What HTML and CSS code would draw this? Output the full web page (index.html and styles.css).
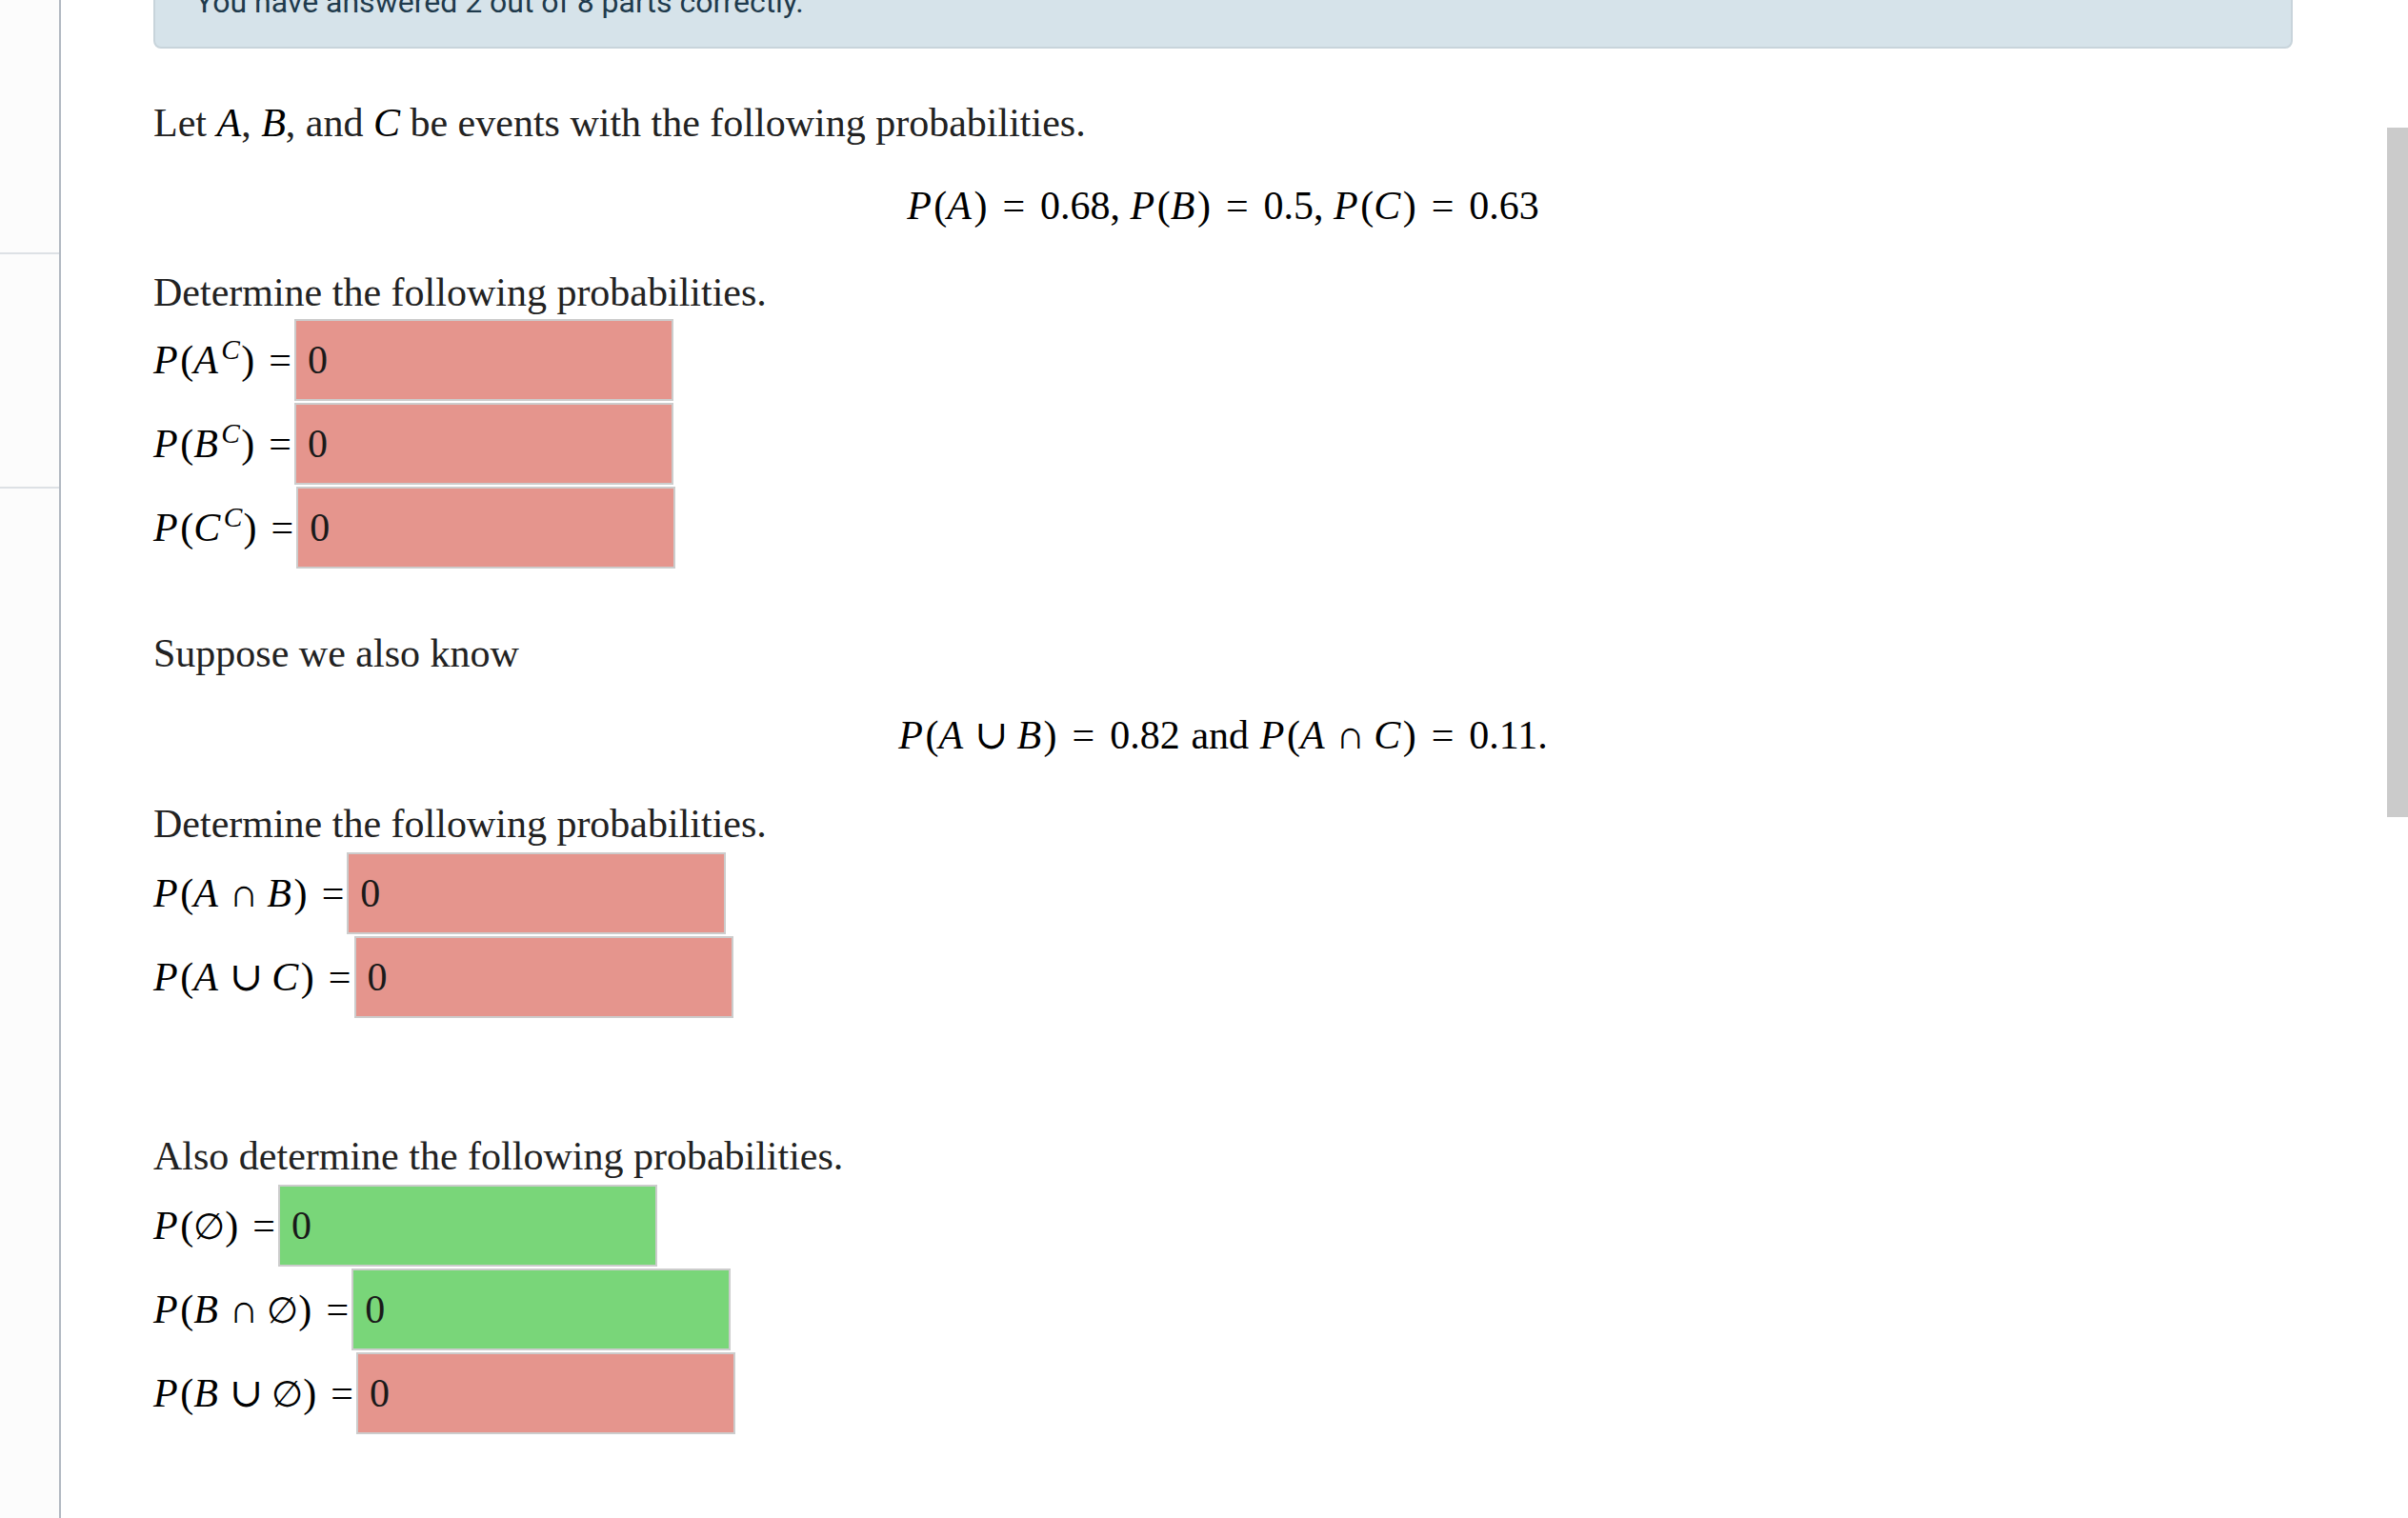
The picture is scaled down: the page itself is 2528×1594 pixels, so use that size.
FILE: index.html
```html
<!DOCTYPE html>
<html lang="en">
<head>
<meta charset="utf-8">
<title>Probability problem</title>
<link rel="stylesheet" href="styles.css">
</head>
<body>
<div class="page">
  <aside class="sidebar">
    <div class="side-a"></div>
    <div class="side-b"></div>
  </aside>
  <main class="main">
    <div class="banner">You have answered 2 out of 8 parts correctly.</div>

    <p class="text t-let">Let <i class="mi">A</i>, <i class="mi">B</i>, and <i class="mi">C</i> be events with the following probabilities.</p>
    <div class="display math d1"><i>P</i>(<i>A</i>)<span class="rel">=</span>0.68,<span class="sp"></span><i>P</i>(<i>B</i>)<span class="rel">=</span>0.5,<span class="sp"></span><i>P</i>(<i>C</i>)<span class="rel">=</span>0.63</div>

    <p class="text t-det1">Determine the following probabilities.</p>
    <div class="answers a1">
      <div class="row"><span class="math label"><i>P</i>(<i>A</i><sup>C</sup>)<span class="req">=</span></span><input class="ans wrong" value="0" readonly></div>
      <div class="row"><span class="math label"><i>P</i>(<i>B</i><sup>C</sup>)<span class="req">=</span></span><input class="ans wrong" value="0" readonly></div>
      <div class="row"><span class="math label"><i>P</i>(<i>C</i><sup>C</sup>)<span class="req">=</span></span><input class="ans wrong" value="0" readonly></div>
    </div>

    <p class="text t-sup">Suppose we also know</p>
    <div class="display math d2"><i>P</i>(<i>A</i><span class="bin">∪</span><i>B</i>)<span class="rel">=</span>0.82<span class="word">and</span><i>P</i>(<i>A</i><span class="bin">∩</span><i>C</i>)<span class="rel">=</span>0.11.</div>

    <p class="text t-det2">Determine the following probabilities.</p>
    <div class="answers a2">
      <div class="row"><span class="math label"><i>P</i>(<i>A</i><span class="bin">∩</span><i>B</i>)<span class="req">=</span></span><input class="ans wrong" value="0" readonly></div>
      <div class="row"><span class="math label"><i>P</i>(<i>A</i><span class="bin">∪</span><i>C</i>)<span class="req">=</span></span><input class="ans wrong" value="0" readonly></div>
    </div>

    <p class="text t-also">Also determine the following probabilities.</p>
    <div class="answers a3">
      <div class="row"><span class="math label"><i>P</i>(<span class="empty">∅</span>)<span class="req">=</span></span><input class="ans right" value="0" readonly></div>
      <div class="row"><span class="math label"><i>P</i>(<i>B</i><span class="bin">∩</span><span class="empty">∅</span>)<span class="req">=</span></span><input class="ans right" value="0" readonly></div>
      <div class="row"><span class="math label"><i>P</i>(<i>B</i><span class="bin">∪</span><span class="empty">∅</span>)<span class="req">=</span></span><input class="ans wrong" value="0" readonly></div>
    </div>
  </main>
  <div class="scroll-thumb"></div>
</div>
</body>
</html>
```

FILE: styles.css
```css
html, body {
  margin: 0;
  padding: 0;
  background: #ffffff;
}

body {
  font-family: "Liberation Serif", "DejaVu Serif", serif;
  color: #222222;
  overflow: hidden;
}

.page {
  display: flex;
  min-height: 1594px;
}

.sidebar {
  width: 62px;
  flex: none;
  background: #fcfcfc;
  border-right: 2px solid #b1b8c1;
}

.side-a {
  height: 265px;
  border-bottom: 2px solid #dde1e5;
}

.side-b {
  height: 244px;
  border-bottom: 2px solid #dde1e5;
}

.main {
  flex: 1;
  min-width: 0;
  padding: 0 121px 0 97px;
  margin-top: -39px;
}

.banner {
  background: #d6e3ea;
  border: 2px solid #c8d4db;
  border-radius: 0 0 8px 8px;
  padding: 20px 42px 28px;
  font-family: Roboto, "Liberation Sans", sans-serif;
  font-size: 32px;
  line-height: 38px;
  color: #1e3a4c;
}

.text {
  margin: 0;
  font-size: 42px;
  line-height: 48px;
  color: #222222;
}

.mi {
  font-style: italic;
  color: #000;
}

.math {
  font-family: "Liberation Serif", "DejaVu Serif", serif;
  font-size: 42px;
  line-height: 48px;
  color: #000000;
  white-space: nowrap;
}

.math i {
  font-style: italic;
  margin-right: 0.06em;
}

.math sup {
  font-size: 0.7em;
  line-height: 0;
  vertical-align: 0.5em;
  font-style: italic;
  margin-left: 1px;
  margin-right: 0.04em;
}

.display {
  text-align: center;
}

.rel {
  margin: 0 0.38em;
}

.req {
  margin-left: 0.36em;
}

.bin {
  margin: 0 0.2222em;
}

.sp {
  display: inline-block;
  width: 0.25em;
}

.word {
  margin: 0 0.28em;
}

.empty {
  font-family: "DejaVu Serif", "Liberation Serif", serif;
  font-size: 0.9em;
}

.t-let { margin-top: 54px; }
.d1 { margin-top: 39px; }
.t-det1 { margin-top: 43px; }
.a1 { margin-top: 4px; }
.t-sup { margin-top: 65px; }
.d2 { margin-top: 38px; }
.t-det2 { margin-top: 45px; }
.a2 { margin-top: 6px; }
.t-also { margin-top: 121px; }
.a3 { margin-top: 6px; }

.answers {
  display: flex;
  flex-direction: column;
  gap: 2px;
}

.row {
  display: flex;
  align-items: baseline;
  gap: 3px;
  height: 86px;
}

.ans {
  width: 398px;
  height: 86px;
  box-sizing: border-box;
  border: 2px solid #cccccc;
  border-radius: 0;
  padding: 0 12px;
  margin: 0;
  font-family: "Liberation Serif", "DejaVu Serif", serif;
  font-size: 42px;
  color: #1a1a1a;
  outline: none;
}

.wrong {
  background: #e5958d;
}

.right {
  background: #79d679;
}

.scroll-thumb {
  position: fixed;
  right: 0;
  top: 134px;
  width: 22px;
  height: 724px;
  background: #cbcbcb;
}
```
